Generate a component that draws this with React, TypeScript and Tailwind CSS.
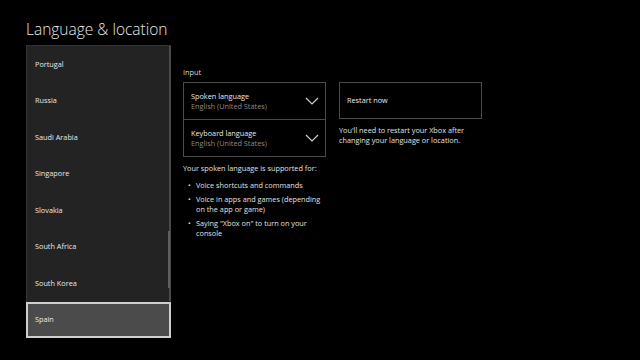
const countries = [
  'Portugal',
  'Russia',
  'Saudi Arabia',
  'Singapore',
  'Slovakia',
  'South Africa',
  'South Korea',
  'Spain',
];

const font = { fontFamily: '"Open Sans", "Noto Sans", sans-serif' };

function Chevron() {
  return (
    <svg width="14" height="8" viewBox="0 0 14 8" fill="none" className="text-[#d0d0d0]">
      <path d="M1 1l6 6 6-6" stroke="currentColor" strokeWidth="1.2" />
    </svg>
  );
}

function Picker({ label, value }: { label: string; value: string }) {
  return (
    <div className="flex h-[36px] items-center justify-between pl-[7px] pr-[6px]">
      <div className="flex flex-col leading-[10px]">
        <span className="text-[7.3px] text-[#e8e8e8]">{label}</span>
        <span className="text-[7.3px] text-[#8a8a8a]">{value}</span>
      </div>
      <Chevron />
    </div>
  );
}

export default function App() {
  return (
    <div className="h-[360px] w-[640px] overflow-hidden bg-black text-white" style={font}>
      <h1 className="pl-[26px] pt-[19px] text-[15.5px] font-light leading-[20px] text-[#e6e6e6]">
        Language &amp; location
      </h1>

      <div className="mt-[6px] flex items-start pl-[26px]">
        <div className="relative h-[293px] w-[145px] border-t border-l border-[#333] bg-[#232323]">
          <div className="grid h-full grid-rows-8">
            {countries.map((c) => (
              <div
                key={c}
                className={
                  c === 'Spain'
                    ? 'flex items-center border-2 border-[#cfcfcf] bg-[#4b4b4b] pl-[7px] text-[7.3px] text-[#e8e8e8] -ml-px'
                    : 'flex items-center pl-[8px] text-[7.3px] text-[#e8e8e8]'
                }
              >
                {c}
              </div>
            ))}
          </div>
          <div className="absolute right-0 top-0 h-[255px] w-[2px] bg-[#4a4a4a]" />
          <div className="absolute right-[1px] top-[185px] h-[57px] w-[2px] bg-[#5e5e5e]" />
        </div>

        <div className="ml-[12px] flex flex-col pt-[22px]">
          <div className="text-[7.3px] leading-[10px] text-[#d8d8d8]">Input</div>
          <div className="mt-[5px] flex items-start gap-[13px]">
            <div className="w-[143px] border border-[#4a4a4a]">
              <Picker label="Spoken language" value="English (United States)" />
              <div className="border-t border-[#4a4a4a]">
                <Picker label="Keyboard language" value="English (United States)" />
              </div>
            </div>
            <div className="flex w-[143px] flex-col">
              <div className="flex h-[37px] items-center border border-[#4a4a4a] pl-[7px] text-[7.3px] text-[#e8e8e8]">
                Restart now
              </div>
              <p className="mt-[6px] text-[7.3px] leading-[10px] text-[#e0e0e0]">
                You'll need to restart your Xbox after changing your language or location.
              </p>
            </div>
          </div>

          <p className="mt-[6px] text-[7.3px] leading-[10px] text-[#e0e0e0]">
            Your spoken language is supported for:
          </p>
          <ul className="mt-[7px] flex w-[142px] flex-col gap-[4px] text-[7.3px] leading-[10px] text-[#e0e0e0]">
            <li className="flex">
              <span className="w-[13px] shrink-0 pl-[5px]">•</span>
              <span>Voice shortcuts and commands</span>
            </li>
            <li className="flex">
              <span className="w-[13px] shrink-0 pl-[5px]">•</span>
              <span>Voice in apps and games (depending on the app or game)</span>
            </li>
            <li className="flex">
              <span className="w-[13px] shrink-0 pl-[5px]">•</span>
              <span>Saying "Xbox on" to turn on your console</span>
            </li>
          </ul>
        </div>
      </div>
    </div>
  );
}
